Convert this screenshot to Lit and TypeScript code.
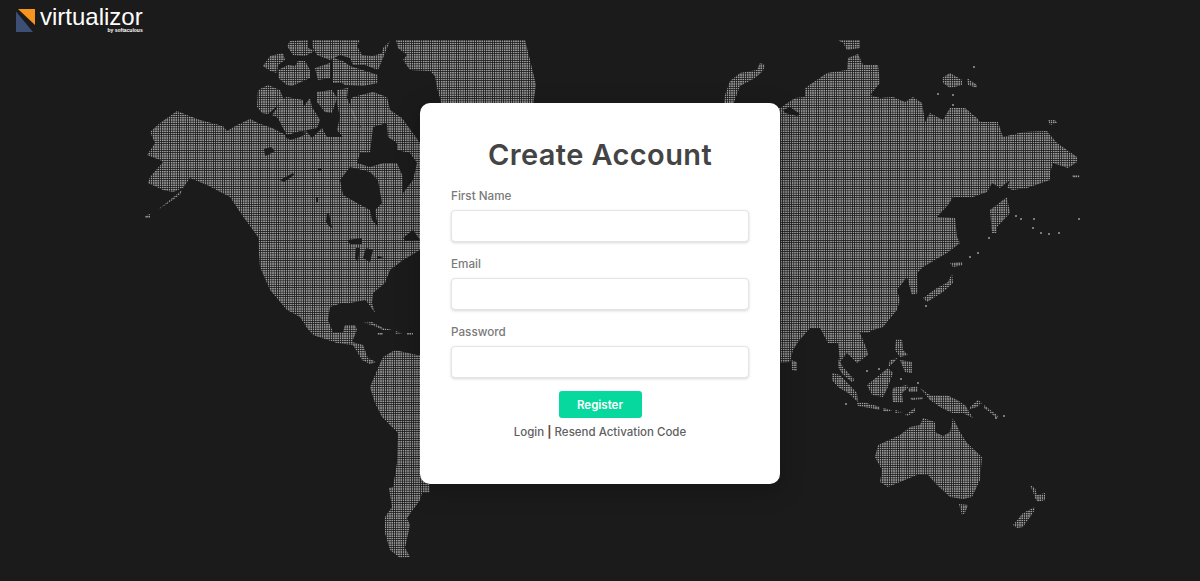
import { LitElement, html, css, svg } from "lit";
import { customElement } from "lit/decorators.js";

const LAND: string[] = [
  // North America mainland
  "150,132 160,123 177,111 187,115 200,120 223,126 227,131 237,125 250,119 258,123 272,128 284,134 287,139 306,131 312,138 322,128 327,137 343,137 357,137 362,130 360,125 352,115 350,100 353,97 373,92 387,97 390,110 402,118 420,143 430,143 430,250 420,250 403,260 390,270 385,283 373,293 372,303 375,313 368,303 365,300 350,303 342,303 330,307 328,320 333,332 343,332 345,325 355,325 357,330 352,342 363,345 368,358 376,362 370,364 362,360 353,345 337,343 322,338 313,335 307,328 300,317 287,310 270,290 260,267 258,237 242,215 230,197 207,185 190,178 183,188 173,192 163,190 148,183 150,177 163,162 160,160 147,155 155,143",
  // Alaska peninsula
  "182,190 160,208 158,210 180,195",
  "145,216 150,214 150,218 145,218",
  // Arctic islands
  "258,90 268,85 280,90 283,98 275,108 268,114 262,113 257,107",
  "278,100 287,97 303,100 303,107 310,98 312,107 320,120 317,128 307,130 287,135 283,128 278,118 272,115 277,108",
  "317,92 332,90 337,98 332,113 325,112 317,102",
  "337,90 348,88 347,98 357,120 362,130 357,137 343,137 337,130 340,117 337,103",
  "263,66 270,56 283,53 285,60 278,65 277,73 270,71",
  "278,70 288,65 295,66 298,61 305,61 310,70 310,78 292,86 287,85 278,78",
  "315,68 330,63 330,78 318,80",
  "333,58 343,61 350,66 378,75 378,83 363,86 345,85 342,83 333,83 333,73",
  "290,41 308,40 308,48 315,51 305,56 293,55 287,46",
  "312,40 360,40 357,46 362,55 373,56 382,53 383,48 390,41 383,58 378,70 365,65 353,65 350,58 340,55 330,60 317,55 312,46",
  // Greenland
  "396,40 398,48 407,55 403,60 410,70 430,71 435,76 437,88 442,105 533,105 536,85 530,60 525,40",
  // Novaya Zemlya
  "724,105 725,95 730,81 740,73 757,70 760,63 765,65 763,71 755,78 740,86 733,105",
  // Asia
  "770,108 780,108 795,98 805,97 805,88 827,73 847,70 848,58 858,54 863,65 878,65 880,83 870,95 880,98 893,97 905,102 913,97 922,103 925,122 930,113 943,120 950,108 965,108 977,118 980,122 998,122 1003,137 1023,132 1047,131 1057,143 1077,157 1077,162 1068,168 1053,163 1050,173 1050,180 1027,188 1013,190 1007,188 1010,180 1000,188 992,183 987,192 973,197 953,197 948,205 937,217 955,218 957,237 960,243 947,253 923,267 917,273 918,293 912,295 907,277 897,290 900,300 897,310 883,327 873,330 868,333 860,333 867,350 868,355 857,363 847,353 840,362 838,343 828,343 820,328 810,328 798,342 793,350 790,362 770,363",
  "791,360 797,362 797,371 792,370",
  // Asia islands
  "942,78 950,73 962,80 962,85 950,88 943,83",
  "967,78 977,85 977,88 968,85",
  "1048,120 1055,120 1057,123 1050,125",
  "838,40 860,40 860,48 847,50 843,43",
  "1072,175 1080,175 1080,178 1073,178",
  "990,210 1007,197 1010,213 997,227 997,233 992,233",
  "923,298 937,288 948,282 952,273 953,283 943,292 927,302",
  "950,263 962,262 963,265 953,267",
  "832,373 840,375 857,393 858,402 848,393 838,387 832,380",
  "838,358 843,367 850,375 855,380 852,382 843,375 838,367",
  "867,385 888,368 893,373 888,387 883,397 872,395",
  "893,388 907,385 908,388 902,393 903,403 893,402 892,393",
  "857,403 863,402 880,407 880,410 870,408 858,406",
  "883,408 892,410 888,412 883,411",
  "895,410 903,412 895,413",
  "905,415 915,408 915,412 907,416",
  "896,339 902,339 903,350 908,355 900,357 895,350",
  "900,360 912,362 912,373 905,372",
  "890,360 898,358 888,368",
  "920,388 930,395 947,395 957,400 965,405 973,418 963,413 952,413 940,407 930,400",
  "910,398 923,397 923,399 912,400",
  "908,388 918,386 918,392 908,392",
  "970,407 978,400 982,403 977,407 970,409",
  "984,405 998,416 997,418 984,408",
  // Australia and NZ
  "875,457 878,445 900,435 910,427 920,425 923,418 935,422 935,432 943,436 950,432 953,418 960,432 967,443 982,457 980,480 972,497 963,499 950,497 937,485 928,475 917,475 900,482 888,487 880,482 882,470",
  "959,504 968,505 965,513 962,515",
  "1030,485 1035,488 1037,495 1045,493 1045,500 1038,502 1035,498 1033,492",
  "1035,507 1035,510 1023,527 1017,528 1013,525 1023,513",
  // South America
  "395,350 417,355 430,355 430,482 430,493 422,493 420,500 407,518 410,525 405,548 410,557 400,558 390,550 385,533 385,517 392,507 389,488 393,487 397,463 398,433 392,427 382,417 375,403 370,387 378,368 383,357",
  // Caribbean
  "363,323 372,322 383,328 392,330 383,330 372,325",
  "395,331 403,333 395,334",
  "377,333 383,333 383,335 377,335",
  "407,333 413,333 413,335 407,335",
];

const WATER: string[] = [
  "340,180 350,167 370,172 378,180 382,203 375,210 378,227 372,220 370,210 357,203 343,195",
  "370,153 373,127 387,123 388,137 397,143 397,150 410,153 417,163 413,180 403,193 403,177 397,163 383,163 370,167 357,163 360,153",
  "264,149 271,147 275,151 268,155 265,156",
  "280,180 293,173 294,175 284,182",
  "318,168 322,168 322,171 318,171",
  "327,213 329,213 332,228 329,226 326,222",
  "347,240 362,238 362,244 350,244",
  "356,248 360,248 358,262 355,258",
  "366,248 373,250 370,262 363,258",
  "377,256 384,257 377,259",
  "403,238 413,230 420,240 405,241",
  "316,197 318,197 318,202 316,202",
  "286,136 300,131 306,134 300,137 290,140",
  "783,110 790,107 800,114 797,116 785,113",
];

const SPECKS: [number, number][] = [
  [973, 66], [937, 93], [952, 94], [952, 104], [1015, 215], [1020, 218], [1033, 218], [1078, 218],
  [1032, 227], [1040, 232], [1048, 233], [1058, 232], [988, 237], [977, 252], [969, 256], [925, 305],
  [878, 368], [866, 370], [845, 403], [917, 382], [900, 378], [1003, 415], [995, 417],
];

@customElement("app-root")
export class AppRoot extends LitElement {
  static styles = css`
    :host {
      display: block;
      font-family: "Inter", "Open Sans", sans-serif;
    }
    .page {
      position: relative;
      height: 581px;
      overflow: hidden;
      background: #1b1b1b;
      display: flex;
      flex-direction: column;
    }
    .map {
      position: absolute;
      inset: 0;
    }
    .brand {
      position: relative;
      display: flex;
      align-items: flex-start;
      gap: 4px;
      padding: 6px 0 0 16px;
      height: 103px;
      box-sizing: border-box;
    }
    .brand svg {
      flex: none;
      margin-top: 2px;
    }
    .wordmark {
      display: flex;
      flex-direction: column;
      align-items: flex-end;
      color: #fff;
      font-family: "Liberation Sans", Arial, sans-serif;
    }
    .wordmark b {
      font-weight: 400;
      font-size: 24px;
      line-height: 22px;
    }
    .wordmark small {
      font-size: 5px;
      font-weight: 700;
      line-height: 5px;
      margin-top: 0;
    }
    .card {
      position: relative;
      box-sizing: border-box;
      width: 360px;
      height: 381px;
      margin: 0 auto;
      padding: 33px 31px 0;
      background: #fff;
      border-radius: 10px;
      box-shadow: 0 6px 24px rgba(0, 0, 0, 0.25);
    }
    h1 {
      margin: 0 0 13px;
      text-align: center;
      font-size: 29px;
      line-height: 38px;
      font-weight: 600;
      letter-spacing: 0.4px;
      color: #444;
    }
    .field {
      display: flex;
      flex-direction: column;
      margin-bottom: 13px;
    }
    label {
      font-size: 11.7px;
      line-height: 18px;
      font-weight: 500;
      color: #7a7a7a;
      margin-bottom: 5px;
    }
    input {
      box-sizing: border-box;
      width: 298px;
      height: 32px;
      border: 1px solid #e4e4e4;
      border-radius: 4px;
      background: #fff;
      box-shadow: 0 1px 3px rgba(0, 0, 0, 0.16);
      outline: none;
    }
    .actions {
      display: flex;
      flex-direction: column;
      align-items: center;
    }
    button {
      width: 83px;
      height: 27px;
      padding: 0;
      border: 0;
      border-radius: 3px;
      background: #07d89d;
      color: #fff;
      font: 600 11.5px "Inter", sans-serif;
    }
    .links {
      margin-top: 6px;
      font-size: 11.5px;
      line-height: 17px;
      font-weight: 500;
      color: #5f5f5f;
    }
    .links a {
      color: inherit;
      text-decoration: none;
    }
    .links span {
      font-weight: 700;
      color: #6b4a3a;
    }
  `;

  private field(name: string, type: string) {
    return html`<div class="field">
      <label>${name}</label>
      <input type=${type} />
    </div>`;
  }

  render() {
    return html`<div class="page">
      <svg class="map" width="1200" height="581" viewBox="0 0 1200 581">
        <defs>
          <pattern id="dots" width="2.25" height="2.25" patternUnits="userSpaceOnUse">
            <rect width="1.5" height="1.5" fill="#a0a0a0"></rect>
          </pattern>
        </defs>
        ${LAND.map((p) => svg`<polygon points=${p} fill="url(#dots)"></polygon>`)}
        ${WATER.map((p) => svg`<polygon points=${p} fill="#1b1b1b"></polygon>`)}
        ${SPECKS.map(([x, y]) => svg`<rect x=${x} y=${y} width="2" height="2" fill="#7a7a7a"></rect>`)}
      </svg>
      <header class="brand">
        <svg width="20" height="24" viewBox="0 0 20 24">
          <polygon points="2,1 19,1 19,17" fill="#f7941d"></polygon>
          <polygon points="0,3.5 17,24 0,24" fill="#3d4f74"></polygon>
        </svg>
        <div class="wordmark">
          <b>virtualizor</b>
          <small>by softaculous</small>
        </div>
      </header>
      <main class="card">
        <h1>Create Account</h1>
        ${this.field("First Name", "text")}
        ${this.field("Email", "email")}
        ${this.field("Password", "password")}
        <div class="actions">
          <button>Register</button>
          <div class="links"><a href="#">Login</a> <span>|</span> <a href="#">Resend Activation Code</a></div>
        </div>
      </main>
    </div>`;
  }
}
